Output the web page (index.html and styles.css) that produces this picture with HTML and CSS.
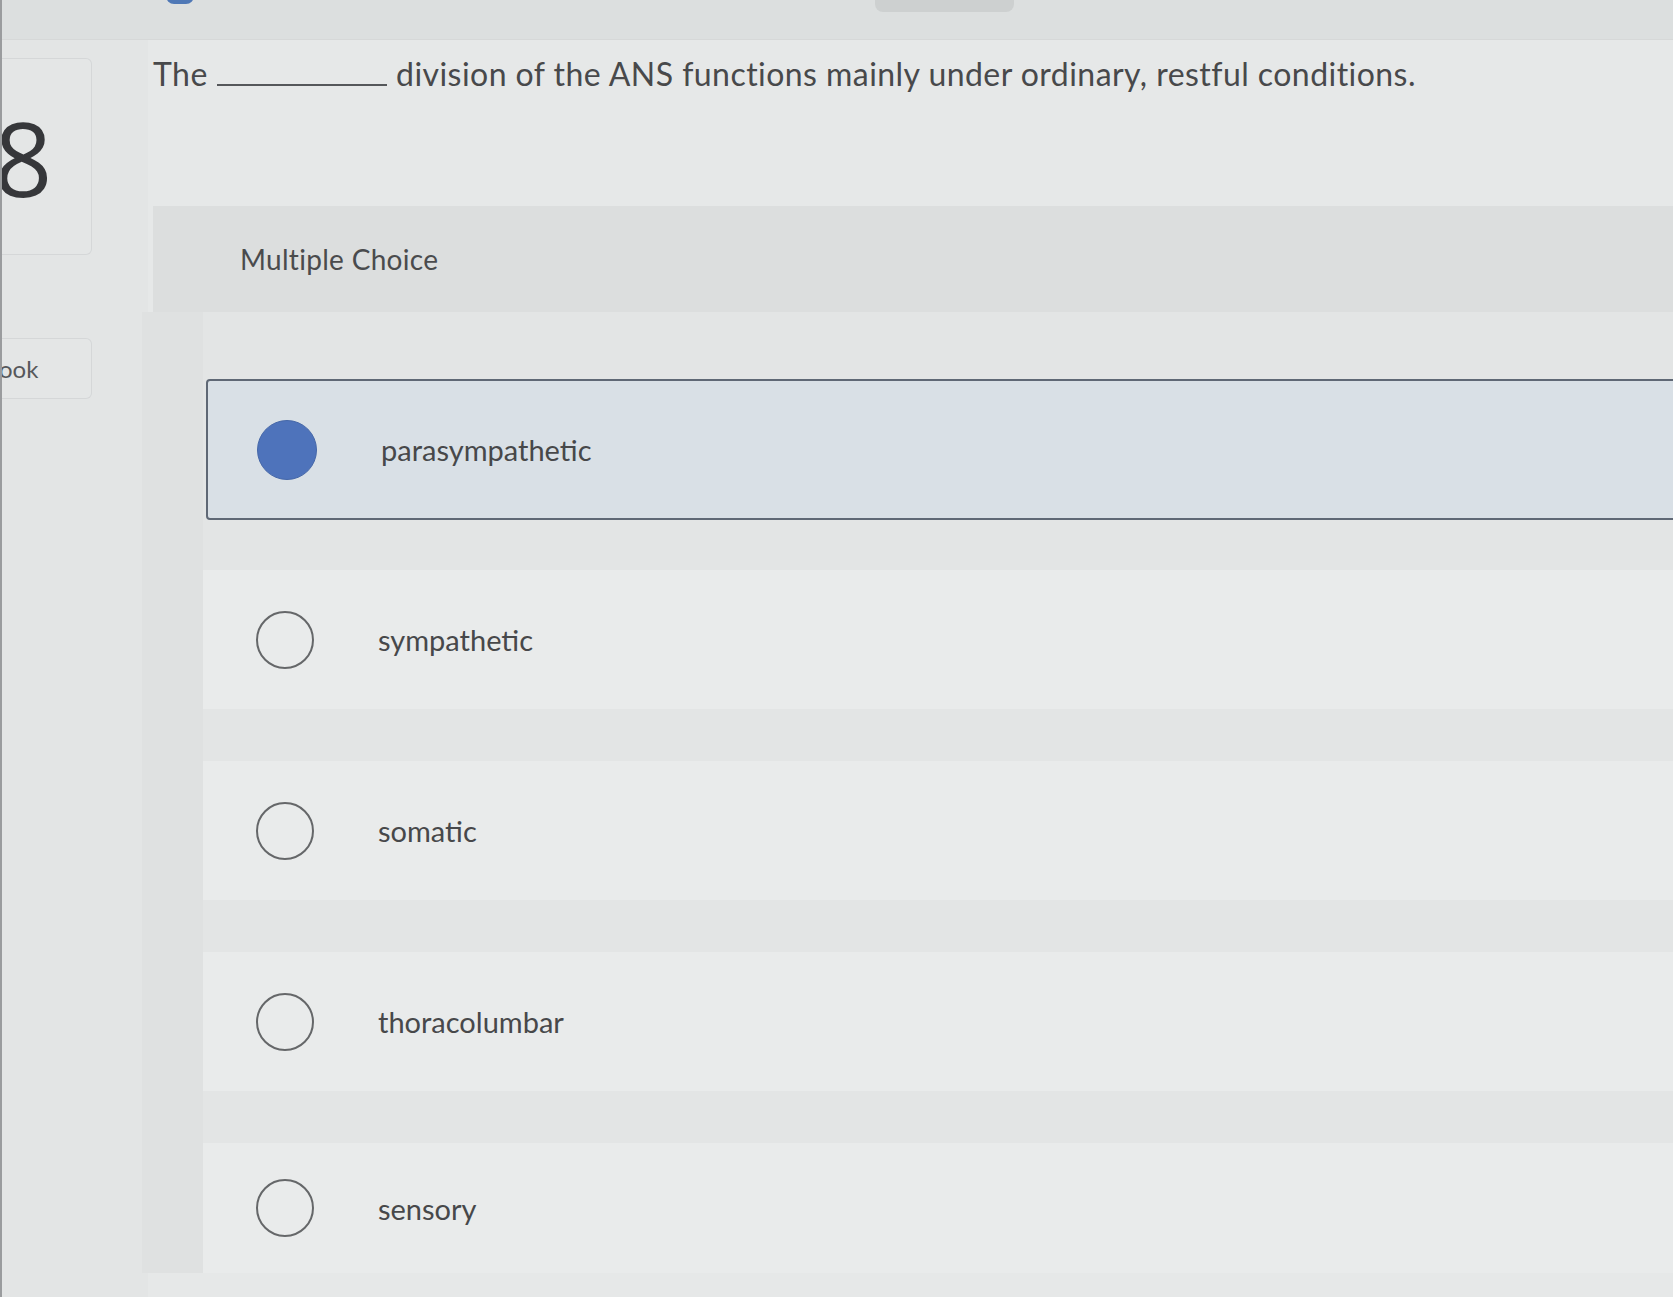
FILE: index.html
```html
<!DOCTYPE html>
<html lang="en">
<head>
<meta charset="utf-8">
<title>Multiple Choice</title>
<link rel="stylesheet" href="styles.css">
</head>
<body>
<div class="page">
  <header class="topbar">
    <span class="top-dot"></span>
    <span class="top-tab"></span>
  </header>
  <div class="layout">
    <aside class="sidebar">
      <div class="card card-number"><span class="number">8</span></div>
      <div class="card card-link"><span class="link-text">ook</span></div>
    </aside>
    <main class="main">
      <p class="question">The <span class="blank"></span> division of the ANS functions mainly under ordinary, restful conditions.</p>
      <div class="mc-band"><span class="mc-label">Multiple Choice</span></div>
      <div class="options">
        <div class="option selected"><span class="radio"></span><span class="option-text">parasympathetic</span></div>
        <div class="option"><span class="radio"></span><span class="option-text">sympathetic</span></div>
        <div class="option"><span class="radio"></span><span class="option-text">somatic</span></div>
        <div class="option"><span class="radio"></span><span class="option-text">thoracolumbar</span></div>
        <div class="option last"><span class="radio"></span><span class="option-text">sensory</span></div>
      </div>
    </main>
  </div>
</div>
</body>
</html>
```
FILE: styles.css
```css
html, body {
  margin: 0;
  padding: 0;
}
body {
  width: 1673px;
  height: 1297px;
  overflow: hidden;
  background: #e6e8e8;
  font-family: Lato, "Open Sans", "Liberation Sans", sans-serif;
  color: #4a4b4d;
}
.page {
  height: 1297px;
  border-left: 2px solid #9a9c9e;
  box-sizing: border-box;
  display: flex;
  flex-direction: column;
}
.topbar {
  height: 40px;
  flex: none;
  background: #dcdfdf;
  border-bottom: 1px solid #d6d8d8;
  box-sizing: border-box;
  display: flex;
  align-items: flex-start;
}
.top-dot {
  width: 28px;
  height: 8px;
  margin-left: 164px;
  margin-top: -4px;
  border-radius: 0 0 14px 14px;
  background: #4f78b6;
}
.top-tab {
  width: 139px;
  height: 12px;
  margin-left: 681px;
  background: #cdd0d0;
  border-radius: 0 0 8px 8px;
}
.layout {
  display: flex;
  flex: 1;
}
.sidebar {
  width: 146px;
  flex: none;
  padding-top: 18px;
  display: flex;
  flex-direction: column;
  gap: 83px;
  background: #e3e5e5;
}
.card {
  width: 90px;
  border: 1px solid #d5d7d8;
  border-left: none;
  border-radius: 0 6px 6px 0;
  background: #e4e6e6;
  box-sizing: border-box;
  overflow: hidden;
}
.card-number {
  height: 197px;
  display: flex;
  align-items: center;
}
.number {
  font-family: "Open Sans", Lato, sans-serif;
  font-size: 102px;
  line-height: 1;
  color: #36373a;
  margin-left: -8px;
  margin-top: 2px;
}
.card-link {
  height: 61px;
  display: flex;
  align-items: center;
}
.link-text {
  font-size: 24px;
  color: #56585b;
  margin-left: -3px;
}
.main {
  flex: 1;
  display: flex;
  flex-direction: column;
  background: #e6e8e8;
}
.question {
  margin: 14px 0 0 5px;
  font-size: 32px;
  letter-spacing: 0.45px;
  line-height: 40px;
  color: #48494b;
  white-space: nowrap;
}
.blank {
  display: inline-block;
  width: 170px;
  border-bottom: 2px solid #55575a;
  margin: 0 0 0 1px;
}
.mc-band {
  margin-top: 112px;
  margin-left: 5px;
  height: 106px;
  flex: none;
  background: #dcdede;
  display: flex;
  align-items: center;
}
.mc-label {
  margin-left: 87px;
  font-size: 28px;
  letter-spacing: 0.3px;
  color: #4a4b4d;
}
.options {
  flex: none;
  margin-left: -6px;
  padding: 67px 0 0 61px;
  background: linear-gradient(to right, #dfe1e1 0, #dfe1e1 61px, #e3e5e5 61px);
  display: flex;
  flex-direction: column;
  gap: 52px;
}
.option {
  height: 139px;
  flex: none;
  width: calc(100% + 40px);
  box-sizing: border-box;
  background: #e9ebeb;
  display: flex;
  align-items: center;
}
.option.last {
  height: 130px;
}
.option.selected {
  height: 141px;
  margin-bottom: -2px;
  margin-left: 3px;
  background: #d9e0e6;
  border: 2px solid #5f6875;
  border-radius: 4px;
}
.radio {
  width: 58px;
  height: 58px;
  border: 2px solid #656769;
  border-radius: 50%;
  box-sizing: border-box;
  margin-left: 53px;
  flex: none;
}
.selected .radio {
  width: 60px;
  height: 60px;
  margin-left: 49px;
  border: 1px solid #4567a8;
  background: #4e73bb;
}
.option-text {
  margin-left: 64px;
  font-size: 29px;
  color: #47484a;
}
```
